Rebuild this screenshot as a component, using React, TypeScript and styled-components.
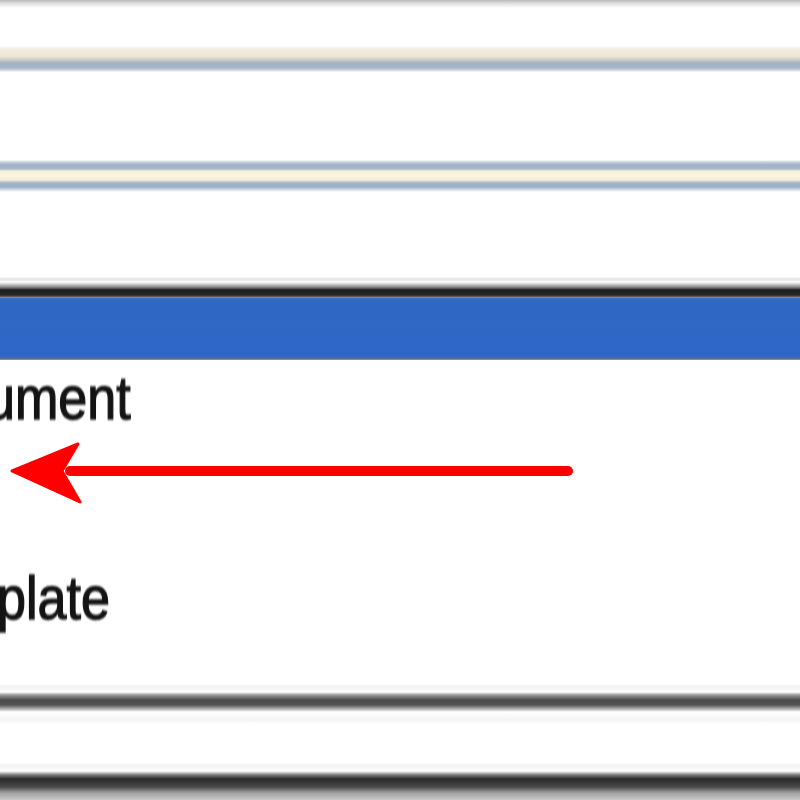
import React from 'react';
import styled, { createGlobalStyle } from 'styled-components';

const GlobalStyle = createGlobalStyle`
  html, body {
    margin: 0;
    padding: 0;
    background: #ffffff;
  }
  body {
    width: 800px;
    height: 800px;
    overflow: hidden;
  }
`;

const Page = styled.div`
  width: 800px;
  height: 800px;
  display: flex;
  flex-direction: column;
  background: #ffffff;
  overflow: hidden;
`;

const TopEdge = styled.div`
  flex: none;
  height: 8px;
  background: linear-gradient(#b9b9b9, #dedede 40%, #ffffff);
`;

const Gap = styled.div<{ $h: number }>`
  height: ${p => p.$h}px;
  flex: none;
`;

const Rebar = styled.div<{ $double?: boolean }>`
  flex: none;
  height: ${p => (p.$double ? 32 : 26)}px;
  background: ${p =>
    p.$double
      ? `linear-gradient(
          #ffffff 0px,
          #c4d2e0 2px,
          #9fb1c4 5px,
          #a8bacb 9px,
          #f6eed8 11px,
          #fdf6e1 16px,
          #f3ecd6 20px,
          #a2b4c6 23px,
          #9cb0c4 27px,
          #d6e0ea 30px,
          #ffffff 32px
        )`
      : `linear-gradient(
          #ffffff 0px,
          #f1ecdf 3px,
          #efe8d5 10px,
          #c9cbc4 14px,
          #9fb2c4 17px,
          #a6b8ca 22px,
          #dbe4ee 25px,
          #ffffff 26px
        )`};
`;

const Menu = styled.div`
  position: relative;
  flex: none;
  display: flex;
  flex-direction: column;
`;

const MenuTop = styled.div`
  height: 21px;
  background: linear-gradient(
    #ffffff 0px,
    #ececec 1px,
    #e6e6e6 3px,
    #ffffff 5px,
    #8a8a8a 10px,
    #1e1e1e 13px,
    #262626 18px,
    #6b6a60 20px,
    #c9a760 21px
  );
`;

const Selected = styled.div`
  height: 62px;
  background: linear-gradient(
    #3a6cc4 0px,
    #2f67c6 4px,
    #3068c4 30px,
    #2d66c8 58px,
    #5a6f8a 61px,
    #c8ab70 62px
  );
`;

const Item = styled.div`
  height: 100px;
  padding-top: 7px;
  box-sizing: border-box;
  font-family: "Liberation Sans", Arial, sans-serif;
  font-size: 62px;
  line-height: 62px;
  color: #141414;
  white-space: nowrap;
`;

const Label = styled.span<{ $shift: number }>`
  display: inline-block;
  transform-origin: left center;
  transform: scaleX(0.84);
  margin-left: ${p => p.$shift}px;
  -webkit-text-stroke: 1.4px #141414;
  filter: blur(0.9px);
`;

const Separator = styled.div`
  flex: none;
  height: 40px;
  margin-top: 24px;
  background: linear-gradient(
    #ffffff 0px,
    #f3f3f3 2px,
    #f6f6f6 5px,
    #ffffff 8px,
    #9a9a9a 11px,
    #4a4a4a 16px,
    #555555 21px,
    #b0b0b0 25px,
    #ffffff 28px,
    #f4f4f4 36px,
    #ffffff 40px
  );
`;

const BottomEdge = styled.div`
  flex: none;
  height: 37px;
  margin-top: 39px;
  background: linear-gradient(
    #ffffff 0px,
    #f2f2f2 2px,
    #f6f6f6 5px,
    #ffffff 8px,
    #777777 12px,
    #2a2a2a 16px,
    #4a4a4a 24px,
    #a2a2a2 30px,
    #c9c9c9 37px
  );
`;

const Pointer = styled.svg`
  position: absolute;
  left: 0;
  top: 144px;
  width: 590px;
  height: 80px;
  overflow: visible;
  filter: blur(0.7px);
`;

const App: React.FC = () => {
  return (
    <Page>
      <GlobalStyle />
      <TopEdge />
      <Gap $h={38} />
      <Rebar />
      <Gap $h={88} />
      <Rebar $double />
      <Gap $h={85} />
      <Menu>
        <MenuTop />
        <Selected />
        <Item>
          <Label $shift={-14}>ument</Label>
        </Item>
        <Item />
        <Item>
          <Label $shift={-3}>plate</Label>
        </Item>
        <Pointer viewBox="0 0 590 80">
          <line x1="70" y1="50" x2="568" y2="50" stroke="#ff0000" strokeWidth="10" strokeLinecap="round" />
          <path d="M12 50 L78 23 L62 50 L80 81 Z" fill="#ff0000" stroke="#ff0000" strokeWidth="3" strokeLinejoin="round" />
        </Pointer>
      </Menu>
      <Separator />
      <BottomEdge />
    </Page>
  );
};

export default App;
